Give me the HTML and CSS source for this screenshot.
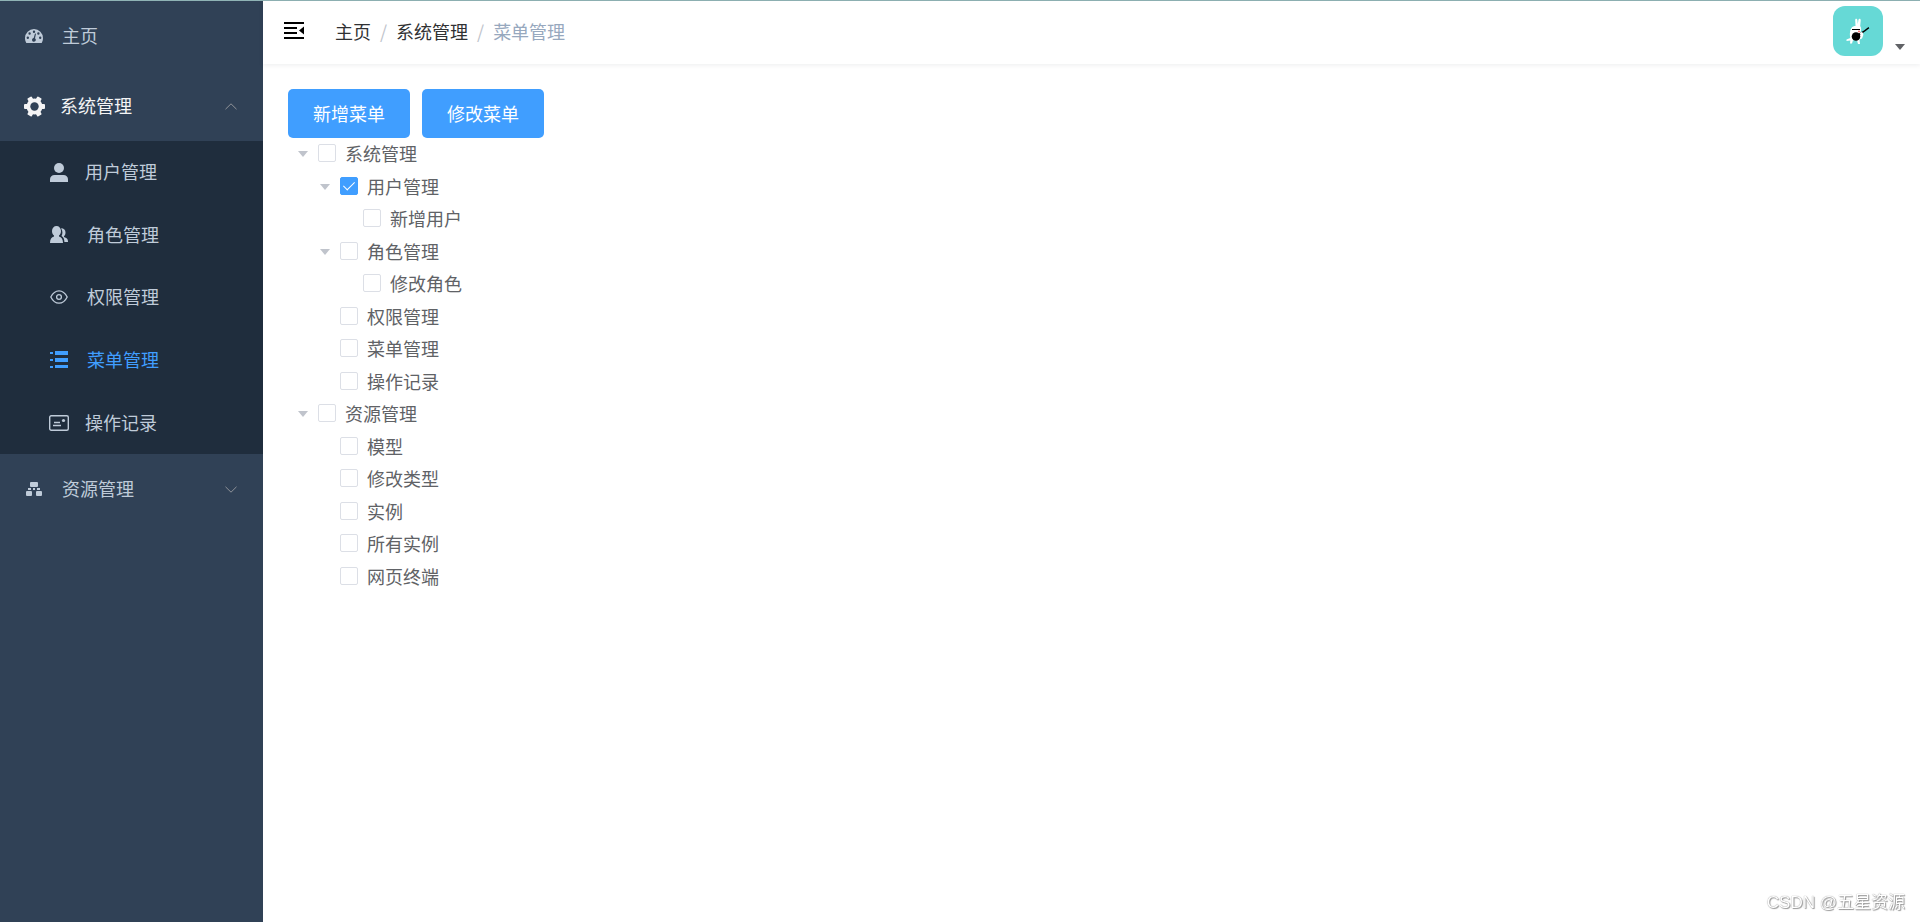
FILE: index.html
```
<!DOCTYPE html>
<html lang="zh-CN">
<head>
    <meta charset="UTF-8">
    <meta name="viewport" content="width=device-width, initial-scale=1.0">
    <title>菜单管理</title>
    <link rel="stylesheet" href="styles.css">
</head>
<body>
    <div class="app">
        <nav class="sidebar">
            <a class="menu-item" href="#home">
                <span class="menu-icon">
                    <svg width="18" height="14" viewBox="0 0 18 14"><path fill="currentColor" fill-rule="evenodd" d="M9 0a9 9 0 0 0-9 9c0 1.900.500 3.500 1.300 5h15.400c.8-1.500 1.300-3.100 1.300-5a9 9 0 0 0-9-9zM9 1.500a1.200 1.200 0 1 1 0 2.400 1.200 1.200 0 0 1 0-2.400zM4.600 3.300a1.200 1.200 0 1 1 0 2.400 1.200 1.200 0 0 1 0-2.400zM2.800 7.600a1.200 1.200 0 1 1 0 2.400 1.200 1.200 0 0 1 0-2.400zM15.200 7.600a1.200 1.200 0 1 1 0 2.400 1.200 1.200 0 0 1 0-2.400zM13.400 3.300a1.200 1.200 0 1 1 0 2.400 1.200 1.200 0 0 1 0-2.400zM10 4.500l1 .3-1 4.500a1.900 1.900 0 1 1-1.300-.3z"/></svg>
                </span>
                <span class="menu-title">主页</span>
            </a>

            <a class="menu-item opened large-icon" href="#system">
                <span class="menu-icon">
                    <svg width="21" height="21" viewBox="0 0 21 21"><g fill="currentColor"><rect x="8" y="0" width="5" height="21" rx="1" transform="rotate(30 10.500 10.500)"/><rect x="8" y="0" width="5" height="21" rx="1" transform="rotate(90 10.500 10.500)"/><rect x="8" y="0" width="5" height="21" rx="1" transform="rotate(150 10.500 10.500)"/><circle cx="10.500" cy="10.500" r="8"/></g><circle cx="10.500" cy="10.500" r="4.200" fill="#304156"/></svg>
                </span>
                <span class="menu-title">系统管理</span>
                <svg class="arrow" width="12" height="7" viewBox="0 0 12 7"><path d="M.5 6.200L6 .8l5.500 5.400" fill="none" stroke="currentColor"/></svg>
            </a>
            <div class="submenu">
                <a class="menu-item large-icon" href="#user">
                    <span class="menu-icon">
                        <svg width="18" height="19" viewBox="0 0 18 19"><g fill="currentColor"><circle cx="9" cy="5" r="5"/><path d="M0 19v-2.500C0 13.500 2 12 4.500 12h9c2.500 0 4.500 1.500 4.500 4.500V19z"/></g></svg>
                    </span>
                    <span class="menu-title">用户管理</span>
                </a>
                <a class="menu-item" href="#role">
                    <span class="menu-icon">
                        <svg width="18" height="17" viewBox="0 0 18 17"><g fill="currentColor"><path d="M6.500 0C9 0 11 2 11 5c0 2-.8 3.500-2 4.500v1c2.500.7 4 2.500 4 6.500H0c0-4 1.500-5.800 4-6.500v-1C2.800 8.500 2 7 2 5c0-3 2-5 4.500-5z"/><path d="M11 2.300c3 0 4.500 1.700 4.500 4.200 0 1.600-.6 2.900-1.500 3.700v.8c2.500.7 4 2 4 4.500V16h-3.600c0-2.900-.9-4.700-2.900-5.900 1.300-2 1.300-5.300-.5-7.800z"/></g></svg>
                    </span>
                    <span class="menu-title">角色管理</span>
                </a>
                <a class="menu-item" href="#permission">
                    <span class="menu-icon">
                        <svg width="18" height="14" viewBox="0 0 18 14"><g fill="none" stroke="currentColor" stroke-width="1.300"><path d="M.8 7C2.800 3 5.600.8 9 .8S15.200 3 17.200 7C15.200 11 12.400 13.200 9 13.200S2.800 11 .8 7z"/><circle cx="9" cy="7" r="2.400"/></g></svg>
                    </span>
                    <span class="menu-title">权限管理</span>
                </a>
                <a class="menu-item active" href="#menu">
                    <span class="menu-icon">
                        <svg width="18" height="18" viewBox="0 0 18 18"><path fill="currentColor" d="M0 1h3v2H0zM5 0h13v4H5zM0 8h3v2H0zM5 7h13v4H5zM0 15h3v2H0zM5 14h13v3H5z"/></svg>
                    </span>
                    <span class="menu-title">菜单管理</span>
                </a>
                <a class="menu-item large-icon" href="#log">
                    <span class="menu-icon">
                        <svg width="20" height="16" viewBox="0 0 20 16"><rect x=".7" y=".7" width="18.600" height="14.600" rx="1.500" fill="none" stroke="currentColor" stroke-width="1.400"/><path d="M5 7.500h6M4 10.500h8" stroke="currentColor" stroke-width="1.400"/><circle cx="14.500" cy="5.500" r="1.600" fill="currentColor"/></svg>
                    </span>
                    <span class="menu-title">操作记录</span>
                </a>
            </div>

            <a class="menu-item" href="#resource">
                <span class="menu-icon">
                    <svg width="16" height="14" viewBox="0 0 16 14"><g fill="currentColor"><rect x="4" width="8" height="5" rx="1"/><rect y="9" width="6" height="5" rx="1"/><rect x="10" y="9" width="6" height="5" rx="1"/><path d="M2 6h3v2H2zM7 6h2v2H7zM11 6h3v2h-3z"/></g></svg>
                </span>
                <span class="menu-title">资源管理</span>
                <svg class="arrow" width="12" height="7" viewBox="0 0 12 7"><path d="M.5.8L6 6.200 11.500.8" fill="none" stroke="currentColor"/></svg>
            </a>
        </nav>

        <div class="main">
            <header class="navbar">
                <button class="fold-btn" type="button" aria-label="折叠菜单">
                    <svg width="20" height="18" viewBox="0 0 20 18"><path d="M0 0h20v2H0zM0 5h13v2H0zM0 10h13v2H0zM0 15h20v2H0zM20 4.500v8l-5-4z" fill="#000"/></svg>
                </button>
                <div class="breadcrumb">
                    <a href="#home">主页</a>
                    <span class="separator">/</span>
                    <a href="#system">系统管理</a>
                    <span class="separator">/</span>
                    <span class="current">菜单管理</span>
                </div>
                <button class="user-menu" type="button" aria-label="用户">
                    <svg class="avatar" width="50" height="50" viewBox="0 0 50 50">
                        <rect width="50" height="50" fill="#66d9d6"/>
                        <path d="M22.500 20l-.3-6c0-1.800 1.800-1.800 2.200 0l.4 4 .6-4c.4-1.800 2.500-1.500 2.300.5L27.200 20c1.300 2 1.300 4.500.3 6l3 2.500-1.500 4-2.500 1 .5 4.500h-2l-1-3.500-4-.3-1 3.300h-2l.3-3-3.800.5v-1.500l3.800-1.500c-.8-4-.5-9 2-11 1-.8 2-1 3.200-1z" fill="#fff"/>
                        <path d="M19 23.500h8" stroke="#000"/>
                        <circle cx="23" cy="30.500" r="4.300"/>
                        <path d="M24 28.500l7-4 4.500-3.500.8 1.200-4.300 3.300-7 5z"/>
                        <circle cx="26" cy="25.500" r="1" fill="#f56c6c"/>
                        <circle cx="28.500" cy="27.500" r="1.500" fill="#fff"/>
                    </svg>
                    <span class="caret"></span>
                </button>
            </header>

            <main class="content">
                <div class="toolbar">
                    <button class="btn-primary" type="button">新增菜单</button>
                    <button class="btn-primary" type="button">修改菜单</button>
                </div>
                <div class="tree">
                    <div class="node"><span class="caret"></span><label><input type="checkbox"><span>系统管理</span></label></div>
                    <div class="node level-2"><span class="caret"></span><label><input type="checkbox" checked><span>用户管理</span></label></div>
                    <div class="node level-3 leaf"><span class="caret"></span><label><input type="checkbox"><span>新增用户</span></label></div>
                    <div class="node level-2"><span class="caret"></span><label><input type="checkbox"><span>角色管理</span></label></div>
                    <div class="node level-3 leaf"><span class="caret"></span><label><input type="checkbox"><span>修改角色</span></label></div>
                    <div class="node level-2 leaf"><span class="caret"></span><label><input type="checkbox"><span>权限管理</span></label></div>
                    <div class="node level-2 leaf"><span class="caret"></span><label><input type="checkbox"><span>菜单管理</span></label></div>
                    <div class="node level-2 leaf"><span class="caret"></span><label><input type="checkbox"><span>操作记录</span></label></div>
                    <div class="node"><span class="caret"></span><label><input type="checkbox"><span>资源管理</span></label></div>
                    <div class="node level-2 leaf"><span class="caret"></span><label><input type="checkbox"><span>模型</span></label></div>
                    <div class="node level-2 leaf"><span class="caret"></span><label><input type="checkbox"><span>修改类型</span></label></div>
                    <div class="node level-2 leaf"><span class="caret"></span><label><input type="checkbox"><span>实例</span></label></div>
                    <div class="node level-2 leaf"><span class="caret"></span><label><input type="checkbox"><span>所有实例</span></label></div>
                    <div class="node level-2 leaf"><span class="caret"></span><label><input type="checkbox"><span>网页终端</span></label></div>
                </div>
            </main>
        </div>
    </div>
    <div class="watermark">CSDN @五星资源</div>
</body>
</html>
```

FILE: styles.css
```
* {
    box-sizing: border-box;
}

body {
    margin: 0;
    font-family: "Noto Sans CJK SC", sans-serif;
    font-size: 18px;
    font-weight: 400;
    line-height: 24px;
    color: #606266;
    background-color: #fff;
}

a {
    color: inherit;
    text-decoration: none;
}

button {
    font: inherit;
    border: none;
    padding: 0;
    background: none;
    cursor: pointer;
}

svg {
    display: block;
}

.app {
    display: flex;
    min-height: 100vh;
    border-top: 1px solid #8fb3b5;
}

/* sidebar */
.sidebar {
    flex: 0 0 263px;
    background-color: #304156;
    color: #bfcbd9;
}

.menu-item {
    display: flex;
    align-items: center;
    gap: 13px;
    height: 70px;
    padding: 0 26px 0 19px;
}

.menu-item.large-icon {
    gap: 11px;
}

.menu-item.opened {
    color: #f4f4f5;
}

.menu-item.active {
    color: #409eff;
}

.menu-icon {
    display: flex;
    justify-content: center;
    width: 30px;
}

.menu-title {
    padding-bottom: 2px;
}

.arrow {
    margin-left: auto;
    color: #909399;
}

.submenu {
    display: grid;
    grid-auto-rows: 1fr;
    min-height: 313px;
    background-color: #1f2d3d;
}

.submenu .menu-item {
    height: auto;
    padding-left: 44px;
}

/* top bar */
.main {
    flex: 1;
    min-width: 0;
}

.navbar {
    display: flex;
    align-items: center;
    height: 63px;
    padding: 0 15px 3px 21px;
    box-shadow: 0 1px 5px rgba(0, 21, 41, 0.08);
}

.breadcrumb {
    display: flex;
    margin-left: 31px;
    color: #303133;
}

.separator {
    margin: 0 9px;
    color: #c0c4cc;
}

.current {
    color: #97a8be;
}

.user-menu {
    display: flex;
    align-items: flex-end;
    gap: 12px;
    margin-left: auto;
}

.avatar {
    border-radius: 12px;
}

.caret {
    border: 5px solid transparent;
    border-top: 6px solid #c0c4cc;
    border-bottom: 0;
}

.user-menu .caret {
    margin-bottom: 6px;
    border-top-color: #606266;
}

/* content */
.content {
    padding: 25px;
}

.toolbar {
    display: flex;
    gap: 12px;
}

.btn-primary {
    padding: 12px 25px 13px;
    border-radius: 5px;
    color: #fff;
    background-color: #409eff;
}

.tree {
    display: grid;
    grid-auto-rows: 1fr;
    min-height: 455px;
}

.node {
    display: flex;
    align-items: center;
    gap: 10px;
    padding-left: 10px;
}

.node.level-2 {
    padding-left: 32px;
}

.node.level-3 {
    padding-left: 55px;
}

.leaf .caret {
    visibility: hidden;
}

.node label {
    display: flex;
    align-items: center;
    gap: 9px;
    padding-bottom: 2px;
}

.node input {
    display: grid;
    place-items: center;
    appearance: none;
    width: 18px;
    height: 18px;
    margin: 0;
    border: 1px solid #dcdfe6;
    border-radius: 2px;
    background-color: #fff;
}

.node input:checked {
    border-color: #409eff;
    background-color: #409eff;
}

.node input:checked::after {
    content: "";
    width: 5px;
    height: 10px;
    margin-bottom: 3px;
    border: 1px solid #fff;
    border-top: 0;
    border-left: 0;
    transform: rotate(45deg);
}

.watermark {
    position: fixed;
    right: 15px;
    bottom: 7px;
    color: #fff;
    font-family: "Liberation Sans", "Noto Sans CJK SC", sans-serif;
    font-size: 17px;
    text-shadow: 0 0 1px #777, 1px 1px 1px #999;
}
```
